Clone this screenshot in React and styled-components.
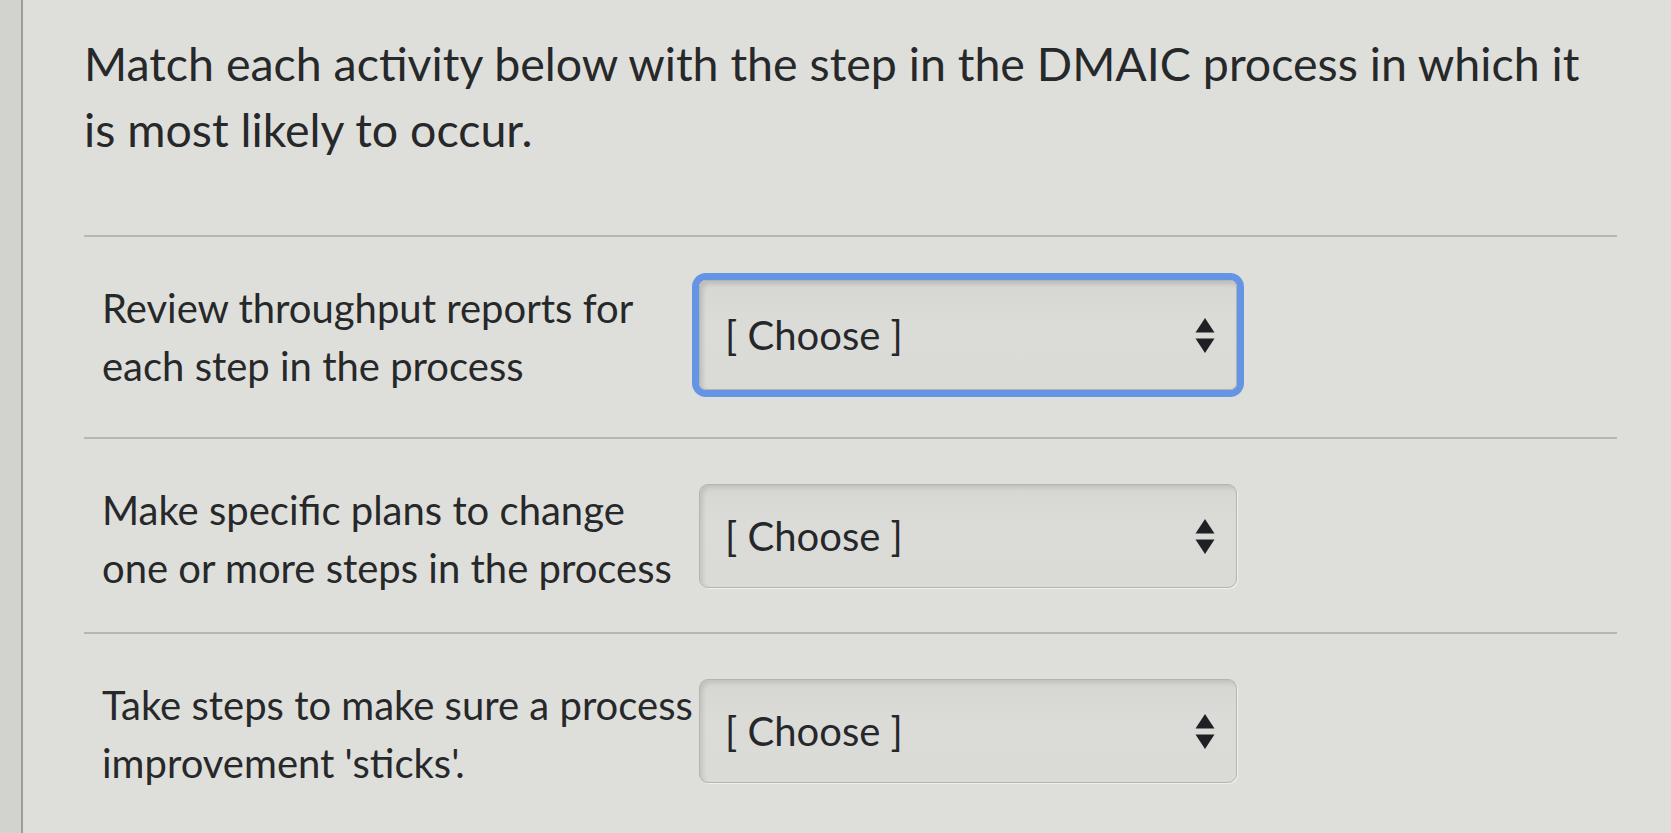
import React from 'react';
import styled, { createGlobalStyle } from 'styled-components';

const GlobalStyle = createGlobalStyle`
  html, body {
    margin: 0;
    padding: 0;
    background: #dedfdb;
  }
  body {
    font-family: Lato, "Open Sans", "Liberation Sans", sans-serif;
    color: #27282a;
    overflow: hidden;
  }
`;

const Page = styled.div`
  display: flex;
  height: 833px;
  overflow: hidden;
`;

const Gutter = styled.div`
  width: 21px;
  flex: none;
  background: #d2d3cf;
  border-right: 2px solid #9c9d9a;
`;

const Content = styled.div`
  padding: 30px 0 0 61px;
  width: 1533px;
  flex: none;
`;

const Question = styled.h1`
  margin: 0 0 73px;
  font-size: 46.5px;
  font-weight: 400;
  line-height: 66px;
  white-space: nowrap;
`;

const Row = styled.div`
  display: grid;
  grid-template-columns: 597px 538px;
  align-items: start;
  padding: 45px 0 0 18px;
  height: ${(p) => p.height}px;
  box-sizing: border-box;
  border-top: 2px solid #b6b7b3;
`;

const Label = styled.div`
  font-size: 40px;
  line-height: 58px;
  margin-top: -3px;
  white-space: nowrap;
`;

const SelectBox = styled.div`
  height: ${(p) => (p.focused ? 110 : 104)}px;
  margin-top: ${(p) => (p.focused ? -2 : 0)}px;
  display: flex;
  align-items: center;
  justify-content: space-between;
  padding: 0 21px 0 25px;
  box-sizing: border-box;
  border-radius: ${(p) => (p.focused ? 7 : 9)}px;
  border: 1px solid #b4b5b1;
  background: linear-gradient(180deg, #d6d7d3 0%, #dbdcd8 40%, #dadbd7 100%);
  box-shadow: ${(p) =>
    p.focused
      ? '0 0 0 7px #6594e4, inset 3px 3px 4px rgba(0,0,0,0.12)'
      : 'inset 3px 3px 4px rgba(0,0,0,0.10), 1px 1px 1px rgba(255,255,255,0.6)'};
  font-size: 40px;
  color: #26272a;
`;

const Arrows = styled.svg`
  width: 20px;
  height: 37px;
  flex: none;
`;

function UpDownIcon() {
  return (
    <Arrows viewBox="0 0 20 37">
      <polygon points="10,1 19.5,15.5 0.5,15.5" fill="#1f2023" />
      <polygon points="0.5,21.5 19.5,21.5 10,36" fill="#1f2023" />
    </Arrows>
  );
}

const items = [
  { text: ['Review throughput reports for', 'each step in the process'], focused: true, height: 202 },
  { text: ['Make specific plans to change', 'one or more steps in the process'], height: 195 },
  { text: ['Take steps to make sure a process', "improvement 'sticks'."], height: 196 },
];

export default function App() {
  return (
    <>
      <GlobalStyle />
      <Page>
        <Gutter />
        <Content>
          <Question>
            Match each activity below with the step in the DMAIC process in which it
            <br />
            is most likely to occur.
          </Question>
          {items.map((item, i) => (
            <Row key={i} height={item.height}>
              <Label>
                {item.text[0]}
                <br />
                {item.text[1]}
              </Label>
              <SelectBox focused={item.focused}>
                <span>[ Choose ]</span>
                <UpDownIcon />
              </SelectBox>
            </Row>
          ))}
        </Content>
      </Page>
    </>
  );
}
